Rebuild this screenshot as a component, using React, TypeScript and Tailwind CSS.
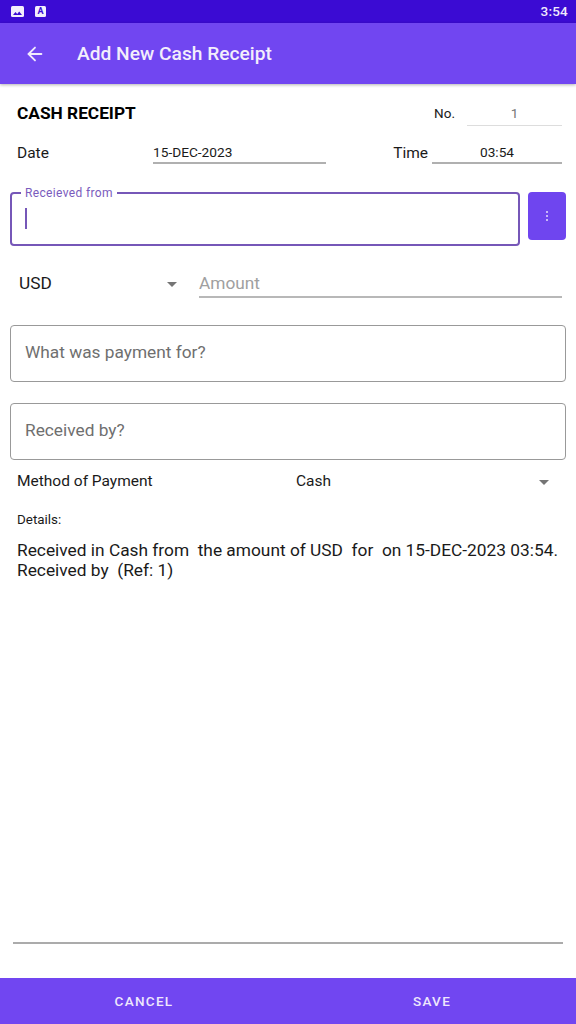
import { ArrowLeft } from 'lucide-react';

function Caret({ className }: { className: string }) {
  return (
    <svg className={className} width="10" height="5" viewBox="0 0 10 5" fill="#757575">
      <path d="M0 0h10L5 5z" />
    </svg>
  );
}

function OutlineField({ label }: { label: string }) {
  return (
    <div className="mx-[10px] flex h-[57px] items-center rounded-[4px] border-[1.5px] border-[#999999] px-[14px] pb-[1px] text-[17.3px] text-[#6f6f6f]">
      {label}
    </div>
  );
}

export default function App() {
  return (
    <div className="flex h-[1024px] w-[576px] flex-col bg-white font-['Roboto',sans-serif] text-[#1a1a1a]">
      {/* Status bar */}
      <div className="flex h-[23px] items-center bg-[#3b0bd3] pl-[11px] pr-[8px] text-white">
        <div className="flex h-[11px] w-[13px] items-center justify-center rounded-[1.5px] bg-[#f3eefc]">
          <svg width="11" height="8" viewBox="0 0 11 8" fill="#3b0bd3">
            <path d="M1 7l2.5-3 1.7 2 2-2.6L10 7z" />
          </svg>
        </div>
        <div className="ml-[11px] flex h-[11px] w-[11px] items-center justify-center rounded-[1.5px] bg-[#f3eefc] text-[9px] font-bold leading-none text-[#3b0bd3]">
          A
        </div>
        <span className="ml-auto text-[13.5px] font-medium tracking-[0.2px] text-[#f0eafc]">3:54</span>
      </div>

      {/* Toolbar */}
      <div className="flex h-[61px] items-center bg-[#7146f1] pl-[24px] text-white shadow-[0_1px_3px_rgba(0,0,0,0.3)]">
        <ArrowLeft size={22} strokeWidth={2} className="text-[#f0eafc]" />
        <h1 className="ml-[31px] pt-[2px] text-[19.2px] font-medium text-[#f3eefc]">Add New Cash Receipt</h1>
      </div>

      {/* Title and number */}
      <div className="mt-[17px] flex h-[25px] items-center pl-[17px] pr-[14px]">
        <span className="text-[17.3px] font-bold text-black">CASH RECEIPT</span>
        <span className="ml-auto text-[13.5px]">No.</span>
        <span className="ml-[12px] flex h-[25px] w-[95px] items-center justify-center border-b border-[#dddddd] text-[13.5px] text-[#777777]">
          1
        </span>
      </div>

      {/* Date and time */}
      <div className="mt-[13px] flex h-[25px] items-center pl-[17px] pr-[14px]">
        <span className="w-[136px] pt-[3px] text-[15.5px] leading-[22px]">Date</span>
        <span className="flex h-[25px] w-[173px] items-center border-b-2 border-[#b0b0b0] pt-[3px] text-[13.7px]">15-DEC-2023</span>
        <span className="ml-auto pt-[3px] text-[15.5px] leading-[22px]">Time</span>
        <span className="ml-[4px] flex h-[25px] w-[130px] items-center justify-center border-b-2 border-[#b0b0b0] pt-[3px] text-[13.7px]">
          03:54
        </span>
      </div>

      {/* Received from */}
      <div className="mt-[28px] flex items-start pl-[10px] pr-[10px]">
        <div className="relative flex h-[54px] w-[511px] items-center rounded-[4px] border-2 border-[#7657b8] pl-[13px]">
          <span className="absolute left-[9px] top-[-8px] bg-white px-[4px] text-[12px] leading-[14px] tracking-[0.35px] text-[#7a5bbd]">
            Receieved from
          </span>
          <span className="mb-[1px] h-[21px] w-[2px] bg-[#7657b8]" />
        </div>
        <div className="ml-[8px] flex h-[48px] w-[38px] flex-col items-center justify-center gap-[2px] rounded-[4px] bg-[#6f45ef]">
          <span className="h-[2px] w-[2px] rounded-full bg-[#e6dcfb]" />
          <span className="h-[2px] w-[2px] rounded-full bg-[#e6dcfb]" />
          <span className="h-[2px] w-[2px] rounded-full bg-[#e6dcfb]" />
        </div>
      </div>

      {/* Currency and amount */}
      <div className="mt-[24px] flex h-[28px] pl-[19px] pr-[14px]">
        <div className="flex w-[158px] items-center">
          <span className="text-[17.3px] text-[#1a1a1a]">USD</span>
          <Caret className="ml-auto" />
        </div>
        <div className="ml-[22px] flex flex-1 items-center border-b-2 border-[#b8b8b8] pt-[2px] text-[17.3px] text-[#a0a0a0]">Amount</div>
      </div>

      <div className="mt-[27px]">
        <OutlineField label="What was payment for?" />
      </div>
      <div className="mt-[21px]">
        <OutlineField label="Received by?" />
      </div>

      {/* Method of payment */}
      <div className="mt-[10px] flex h-[22px] items-center pl-[17px] pr-[27px] pt-[2px] text-[15.5px]">
        <span className="w-[279px]">Method of Payment</span>
        <span>Cash</span>
        <Caret className="ml-auto" />
      </div>

      <div className="mt-[20px] pl-[17px] text-[13.4px] leading-[16px]">Details:</div>

      <p className="mt-[12px] flex-1 pl-[17px] pr-[10px] text-[17.32px] leading-[20px] whitespace-pre-wrap">
        {'Received in Cash from  the amount of USD  for  on 15-DEC-2023 03:54.\nReceived by  (Ref: 1)'}
      </p>

      <div className="mx-[13px] mb-[34px] h-[2px] bg-[#ababab]" />

      {/* Bottom actions */}
      <div className="flex h-[46px] bg-[#7146f1] text-[13.5px] font-medium tracking-[1.3px] text-[#eee7fc]">
        <div className="flex w-[288px] items-center justify-center">CANCEL</div>
        <div className="flex w-[288px] items-center justify-center">SAVE</div>
      </div>
    </div>
  );
}
